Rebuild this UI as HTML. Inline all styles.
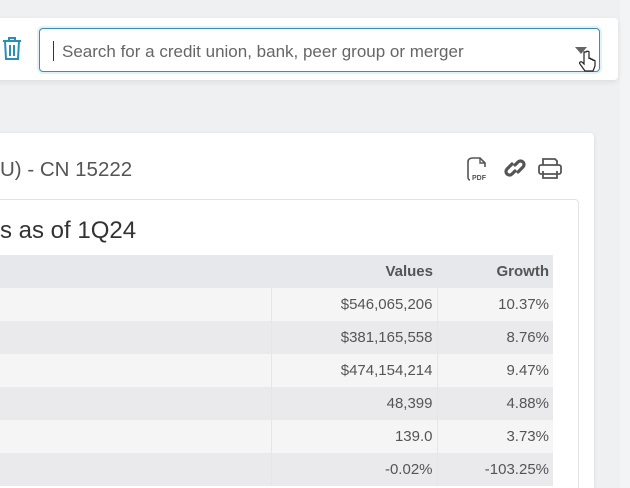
<!DOCTYPE html>
<html style="width:630px;height:488px;overflow:hidden"><head><style>
*{margin:0;padding:0;box-sizing:border-box}
body{width:630px;height:488px;overflow:hidden;background:#eef0f2;font-family:"Liberation Sans",Roboto,sans-serif;position:relative;color:#555}
.top{position:absolute;left:-10px;top:18px;width:628px;height:62px;background:#fff;border-radius:4px;box-shadow:0 2px 6px rgba(0,0,0,.08)}
.search{position:absolute;left:39px;top:28px;width:561px;height:44px;border:1px solid #3a8fb0;border-radius:4px;background:#fff;box-shadow:0 0 0 2px #e3f1f7}
.search span{position:absolute;left:22px;top:13px;font-size:17px;color:#666}
.search .cur{position:absolute;left:13px;top:12px;width:1px;height:20px;background:#333}
.tri{position:absolute;left:535px;top:18px;border-left:6px solid transparent;border-right:6px solid transparent;border-top:7px solid #666}
.outer{position:absolute;left:-10px;top:133px;width:604px;height:355px;background:#fff;border-radius:4px 4px 0 0;box-shadow:0 1px 4px rgba(0,0,0,.1)}
.inner{position:absolute;left:-10px;top:199px;width:589px;height:289px;background:#fff;border:1px solid #e3e3e3;border-bottom:none;border-radius:4px 4px 0 0}
.strip{position:absolute;left:620px;top:0;width:10px;height:488px;background:#f3f4f5}
.title{position:absolute;left:0;top:158px;font-size:20.5px;color:#555}
.sub{position:absolute;left:0;top:217px;font-size:24px;color:#333}
table{position:absolute;left:0;top:255px;width:553px;border-collapse:collapse;font-size:15px}
td,th{height:33px;text-align:right;padding-right:4px}
th{background:#e6e8eb;font-weight:bold;color:#555}
tr:nth-child(even) td{background:#f5f5f5}
tr:nth-child(odd) td{background:#eaeaec}
td.c1{width:271px;border-right:1px solid #e6e6e6}
td.c2{width:166px;border-right:1px solid #e6e6e6}
</style></head><body>
<div class="strip"></div>
<div class="top"></div>
<svg style="position:absolute;left:0;top:34px" width="24" height="28" viewBox="0 0 24 28"><g fill="none" stroke="#2a8fb5" stroke-width="2"><path d="M3 7h18M9 7V4h6v3M5 7l1 18h12l1-18M10 11v11M14 11v11"/></g></svg>
<div class="search"><div class="cur"></div><span>Search for a credit union, bank, peer group or merger</span><div class="tri"></div></div>
<svg style="position:absolute;left:578px;top:50px" width="18" height="26" viewBox="0 0 18 26"><path d="M6 2v12l-2-2c-2-1-3 1-2 2l5 7h8l2-5v-5c0-1-2-1-2 0V10c0-1-2-1-2 0V9c0-1-2-1-2 0V2c0-1-3-1-3 0z" fill="#fff" stroke="#222" stroke-width="1.2"/></svg>
<div class="outer"></div>
<div class="title">U) - CN 15222</div>
<svg style="position:absolute;left:465px;top:156px" width="24" height="26" viewBox="0 0 24 26"><path d="M8 2h7l5 5v4M8 2C5 2 3 3 3 6v15c0 2 1 3 2 3" fill="none" stroke="#555" stroke-width="1.6"/><path d="M15 2v5h5" fill="none" stroke="#555" stroke-width="1.4"/><text x="7" y="24" font-size="7" font-weight="bold" fill="#555" font-family="Liberation Sans">PDF</text></svg>
<svg style="position:absolute;left:501px;top:157px" width="28" height="22" viewBox="0 0 28 22"><g fill="none" stroke="#555" stroke-width="3.2" stroke-linecap="round"><path d="M11 7l-5 5a3.5 3.5 0 0 0 5 5l3-3"/><path d="M17 15l5-5a3.5 3.5 0 0 0-5-5l-3 3"/></g></svg>
<svg style="position:absolute;left:537px;top:156px" width="26" height="26" viewBox="0 0 26 26"><g fill="none" stroke="#555" stroke-width="1.8"><path d="M6 9V3h12l2 2v4"/><rect x="2" y="9" width="22" height="9" rx="2"/><path d="M6 15v7h14v-7"/></g></svg>
<div class="inner"></div>
<div class="sub">s as of 1Q24</div>
<table>
<tr><th></th><th>Values</th><th>Growth</th></tr>
<tr><td class="c1"></td><td class="c2">$546,065,206</td><td>10.37%</td></tr>
<tr><td class="c1"></td><td class="c2">$381,165,558</td><td>8.76%</td></tr>
<tr><td class="c1"></td><td class="c2">$474,154,214</td><td>9.47%</td></tr>
<tr><td class="c1"></td><td class="c2">48,399</td><td>4.88%</td></tr>
<tr><td class="c1"></td><td class="c2">139.0</td><td>3.73%</td></tr>
<tr><td class="c1"></td><td class="c2">-0.02%</td><td>-103.25%</td></tr>
</table>
</body></html>
